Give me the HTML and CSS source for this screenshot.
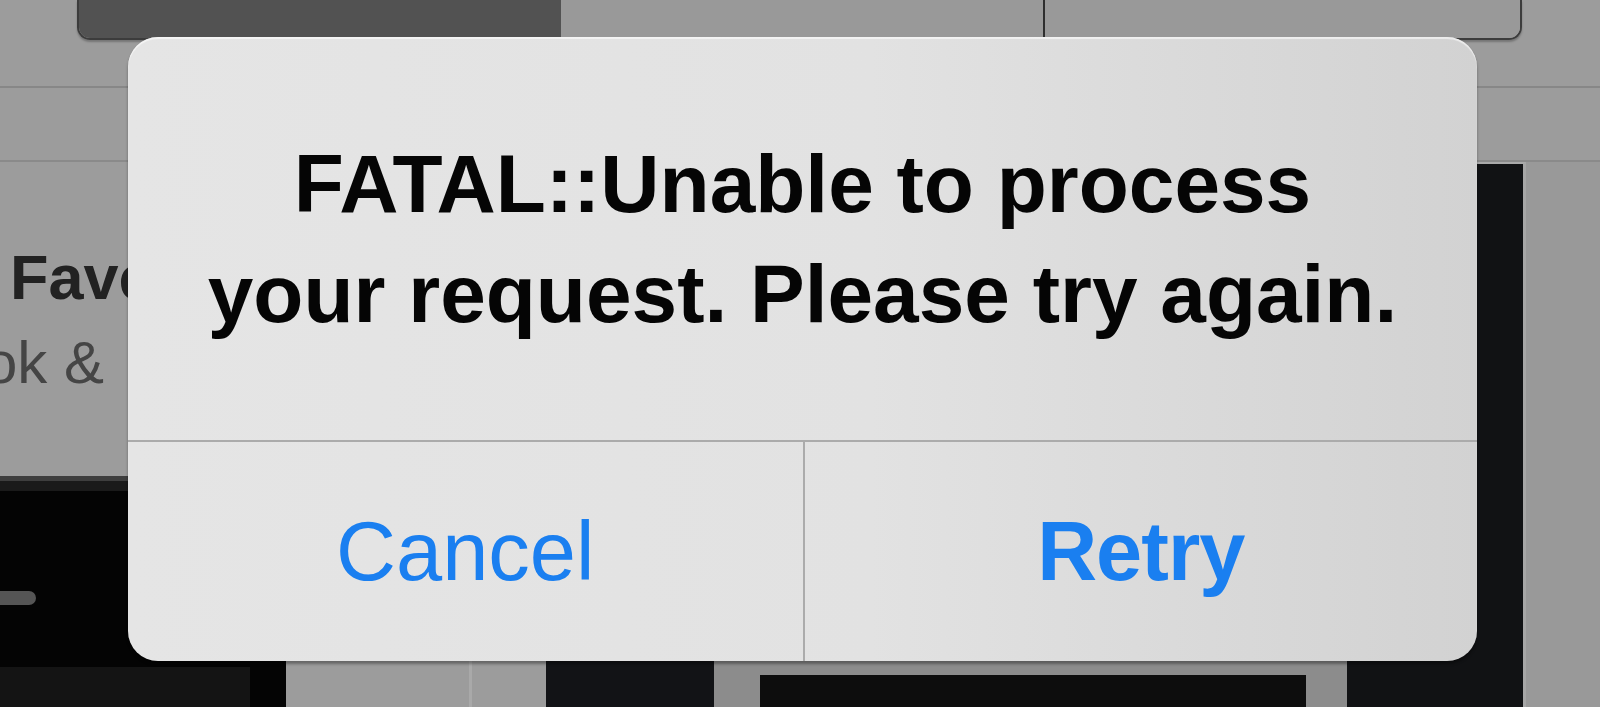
FILE: index.html
```html
<!DOCTYPE html>
<html lang="en">
<head>
  <meta charset="UTF-8" />
  <meta name="viewport" content="width=device-width, initial-scale=1.0"/>
  <title>Request failed</title>
  <link rel="stylesheet" href="styles.css">
</head>
<body>
<div class="app">
  <div class="segbar">
    <div class="seg seg-active"></div>
    <div class="seg"></div>
    <div class="seg seg-last"></div>
  </div>
  <div class="navrow"></div>
  <div class="subrow"></div>

  <div class="content">
    <div class="col col-text">
      <div class="fav-text">
        <div class="fav-title">Fave</div>
        <div class="fav-sub">ok &amp;</div>
      </div>
      <div class="tile-dark">
        <div class="pill"></div>
        <div class="tile-inner"></div>
      </div>
    </div>
    <div class="col col-gap"></div>
    <div class="col col-gap col-gap-b"></div>
    <div class="col col-dark"></div>
    <div class="col col-frame"><div class="frame-inner"></div></div>
    <div class="col col-panel"></div>
    <div class="col col-edge"></div>
  </div>
</div>

<!-- alert sits over the app -->
<div class="alert">
  <div class="alert-message">FATAL::Unable to process your request. Please try again.</div>
  <div class="alert-actions">
    <button class="alert-btn">Cancel</button>
    <button class="alert-btn alert-btn-primary">Retry</button>
  </div>
</div>
</body>
</html>
```

FILE: styles.css
```css
  body {
    margin: 0;
    width: 1600px;
    height: 707px;
    overflow: hidden;
    background: #9c9c9c;
    font-family: "Liberation Sans", Arial, sans-serif;
  }

  .app {
    display: flex;
    flex-direction: column;
    height: 707px;
  }

  .segbar {
    display: grid;
    grid-template-columns: 482px 482px 1fr;
    height: 39px;
    margin: 0 78px 0 77px;
    border: 2px solid #3c3c3c;
    border-top: none;
    border-radius: 0 0 13px 13px;
    overflow: hidden;
    box-shadow: 0 2px 2px rgba(0,0,0,0.25);
  }

  .seg {
    background: #999;
  }

  .seg-active {
    background: #525252;
  }

  .seg-last {
    border-left: 2px solid #2e2e2e;
  }

  .navrow {
    height: 48px;
    border-bottom: 2px solid #878787;
  }

  .subrow {
    height: 75px;
    border-bottom: 2px solid #8a8a8a;
  }

  .content {
    flex: 1;
    display: grid;
    grid-template-columns: 286px 183px 77px 168px 633px 179px 1fr;
  }

  .col-text {
    display: flex;
    flex-direction: column;
    overflow: hidden;
  }

  .fav-text {
    height: 314px;
    padding-top: 84px;
    box-sizing: border-box;
  }

  .fav-title {
    margin-left: 10px;
    font-size: 63px;
    font-weight: bold;
    line-height: 1;
    color: #222;
  }

  .fav-sub {
    margin-top: 24px;
    margin-left: -16px;
    font-size: 60px;
    font-weight: 300;
    line-height: 1;
    color: #454545;
  }

  .tile-dark {
    flex: 1;
    display: flex;
    flex-direction: column;
    background: #040404;
    border-top: 5px solid #3e3e3e;
    box-shadow: inset 0 10px 0 #1a1a1a;
  }

  .pill {
    width: 36px;
    height: 14px;
    margin-top: 110px;
    border-radius: 0 7px 7px 0;
    background: #555;
  }

  .tile-inner {
    width: 250px;
    height: 40px;
    margin-top: 62px;
    background: #141414;
  }

  .col-gap-b {
    border-left: 3px solid #a9a9a9;
  }

  .col-dark {
    background: #121316;
  }

  .col-frame {
    display: flex;
    flex-direction: column;
    justify-content: flex-end;
    padding: 0 41px 0 46px;
    background: #8c8c8c;
  }

  .frame-inner {
    height: 32px;
    background: #0d0d0d;
  }

  .col-panel {
    background: #111214;
    border-top: 2px solid #aaa;
    border-right: 3px solid #a6a6a6;
  }

  .col-edge {
    background: #999;
  }

  .alert {
    position: absolute;
    left: 128px;
    top: 37px;
    width: 1349px;
    height: 624px;
    display: flex;
    flex-direction: column;
    border-radius: 30px;
    overflow: hidden;
    background: linear-gradient(to right, #e5e5e5 0%, #e2e2e2 55%, #d2d2d2 100%);
    box-shadow: 0 3px 3px rgba(0,0,0,0.35), inset 0 2px 1px rgba(255,255,255,0.6);
  }

  .alert-message {
    height: 403px;
    display: flex;
    align-items: center;
    justify-content: center;
    padding: 0 68px 0;
    box-sizing: border-box;
    text-align: center;
    font-size: 82px;
    font-weight: bold;
    line-height: 110px;
    color: #050505;
  }

  .alert-actions {
    flex: 1;
    display: grid;
    grid-template-columns: 1fr 1fr;
    border-top: 2px solid #ababab;
  }

  .alert-btn {
    border: none;
    background: none;
    padding: 0;
    font-family: inherit;
    font-size: 83px;
    line-height: 1;
    color: #1a7ff0;
  }

  .alert-btn-primary {
    font-weight: bold;
    letter-spacing: -1px;
    border-left: 2px solid #ababab;
  }
```
